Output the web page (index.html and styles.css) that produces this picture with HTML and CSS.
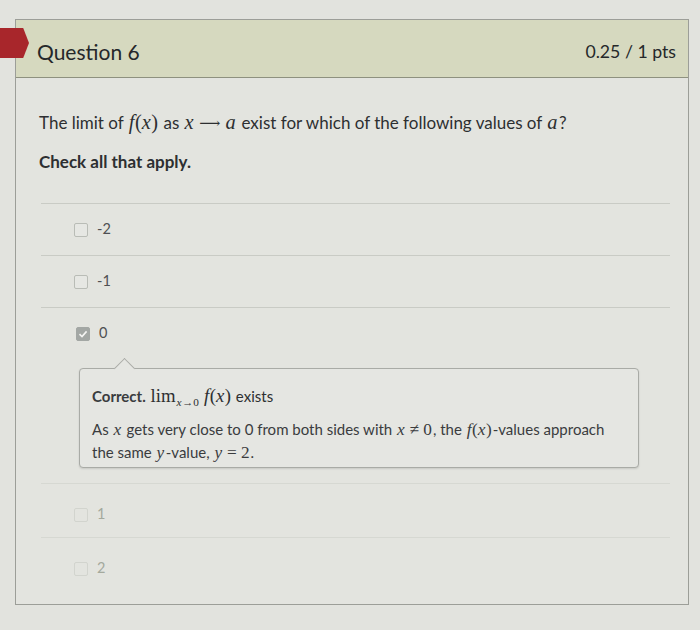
FILE: index.html
```html
<!DOCTYPE html>
<html lang="en">
<head>
<meta charset="utf-8">
<title>Question 6</title>
<link rel="stylesheet" href="styles.css">
</head>
<body>
<div class="page">
  <div class="card">
    <div class="header">
      <span class="flag"></span>
      <h2 class="q-name">Question 6</h2>
      <span class="q-points">0.25 / 1 pts</span>
    </div>
    <div class="body">
      <p class="q-text">The limit of <span class="m"><i>f</i>(<i>x</i>)</span> as <span class="m"><i>x</i> <span class="arr">&#10230;</span> <i>a</i></span> exist for which of the following values of <span class="m"><i>a</i></span>?</p>
      <p class="q-note">Check all that apply.</p>
      <div class="answers">
        <div class="answer">
          <span class="box"></span><span class="label">-2</span>
        </div>
        <div class="answer">
          <span class="box"></span><span class="label">-1</span>
        </div>
        <div class="answer answer-open">
          <div class="answer-row">
            <span class="box checked"><svg viewBox="0 0 12 12" width="12" height="12"><path d="M2.5 6.2 L5 8.6 L9.6 3.4" fill="none" stroke="#f4f4f2" stroke-width="1.6"/></svg></span><span class="label">0</span>
          </div>
          <div class="callout">
            <span class="callout-arrow"></span>
            <p class="c-title"><b>Correct.</b> <span class="m lim-expr"><span class="lim">lim</span><sub><i>x</i>&#8594;0</sub><i>f</i>(<i>x</i>)</span> exists</p>
            <p class="c-text">As <span class="m"><i>x</i></span> gets very close to 0 from both sides with <span class="m"><i>x</i> &#8800; 0</span>, the <span class="m"><i>f</i>(<i>x</i>)</span>-values approach the same <span class="m"><i>y</i></span>-value, <span class="m"><i>y</i> = 2</span>.</p>
          </div>
        </div>
        <div class="answer faded">
          <span class="box"></span><span class="label">1</span>
        </div>
        <div class="answer faded">
          <span class="box"></span><span class="label">2</span>
        </div>
      </div>
    </div>
  </div>
</div>
</body>
</html>
```
FILE: styles.css
```css
html, body {
  margin: 0;
  padding: 0;
}
body {
  background: #e2e3de;
  font-family: Lato, "Open Sans", "Liberation Sans", sans-serif;
  color: #2d2f31;
  width: 700px;
  height: 630px;
  overflow: hidden;
}
.page {
  padding: 19px 0 0 15px;
}
.card {
  width: 674px;
  border: 1px solid #9c9e98;
  background: #e3e4df;
  height: 586px;
  box-sizing: border-box;
}
.header {
  position: relative;
  height: 58px;
  background: #d6d9bf;
  border-bottom: 1px solid #8e917f;
  display: flex;
  align-items: center;
  justify-content: space-between;
  padding: 6px 12px 0 21px;
  box-sizing: border-box;
}
.flag {
  position: absolute;
  left: -16px;
  top: 8px;
  width: 29px;
  height: 30px;
  background: #a8262b;
  clip-path: polygon(0 0, 80% 0, 100% 50%, 80% 100%, 0 100%);
}
.q-name {
  margin: 0;
  font-size: 21px;
  font-weight: 400;
  color: #25282a;
}
.q-points {
  font-size: 17.7px;
  color: #25282a;
}
.body {
  padding: 0 18px 0 23px;
}
.q-text {
  margin: 33px 0 0;
  font-size: 17px;
  line-height: 24px;
}
.q-note {
  margin: 15px 0 0;
  font-size: 17px;
  line-height: 24px;
  font-weight: 700;
}
.m {
  font-family: "Liberation Serif", "DejaVu Serif", serif;
  font-size: 1.2em;
  line-height: 1;
  margin: 0 1px;
}
.m i {
  font-style: italic;
  padding-right: 0.5px;
}
.arr {
  font-size: 0.72em;
  vertical-align: 0.05em;
}
.answers {
  margin: 29px 0 0 2px;
}
.answer {
  border-top: 1px solid #c9cbc5;
  height: 51px;
  display: flex;
  align-items: center;
  padding-left: 33px;
  font-size: 14.5px;
  color: #4e5052;
}
.answer-open {
  display: block;
  height: auto;
  padding-left: 0;
  padding-bottom: 15px;
}
.answer-row {
  height: 51px;
  display: flex;
  align-items: center;
  padding-left: 35px;
}
.box {
  width: 12px;
  height: 12px;
  border: 1px solid #b9bcb6;
  border-radius: 2px;
  background: #e6e7e3;
  margin-right: 9px;
  display: inline-flex;
  align-items: center;
  justify-content: center;
}
.box.checked {
  background: #a3a7a4;
  border-color: #a3a7a4;
}
.label {
  line-height: 1;
}
.callout {
  position: relative;
  margin: 9px 0 0 38px;
  width: 560px;
  box-sizing: border-box;
  border: 1px solid #a9aba6;
  border-radius: 4px;
  background: #e5e6e2;
  box-shadow: 0 1px 2px rgba(0, 0, 0, 0.12);
  padding: 15px 26px 3px 12px;
  color: #2d2f31;
  font-size: 15px;
}
.callout-arrow {
  position: absolute;
  left: 37px;
  top: -8px;
  width: 14px;
  height: 14px;
  background: #e5e6e2;
  border-left: 1px solid #a9aba6;
  border-top: 1px solid #a9aba6;
  transform: rotate(45deg);
}
.c-title {
  margin: 0;
  line-height: 24px;
}
.c-title b {
  font-weight: 700;
  color: #3a3c3e;
}
.lim-expr {
  font-size: 1.25em;
}
.lim {
  font-style: normal;
}
.c-title sub {
  font-family: "Liberation Serif", serif;
  font-size: 0.6em;
  vertical-align: -0.35em;
  line-height: 0;
  margin: 0 5px 0 1px;
}
.c-text {
  margin: 10px 0 0;
  line-height: 23px;
  color: #3a3c3e;
}
.c-text .m {
  font-size: 1.15em;
}
.faded {
  color: #a4a99d;
  border-top-color: #d6d8d2;
  height: 45px;
  padding-top: 8px;
}
.faded .box {
  border-color: #d2d4ce;
  background: #e3e4df;
}
```
